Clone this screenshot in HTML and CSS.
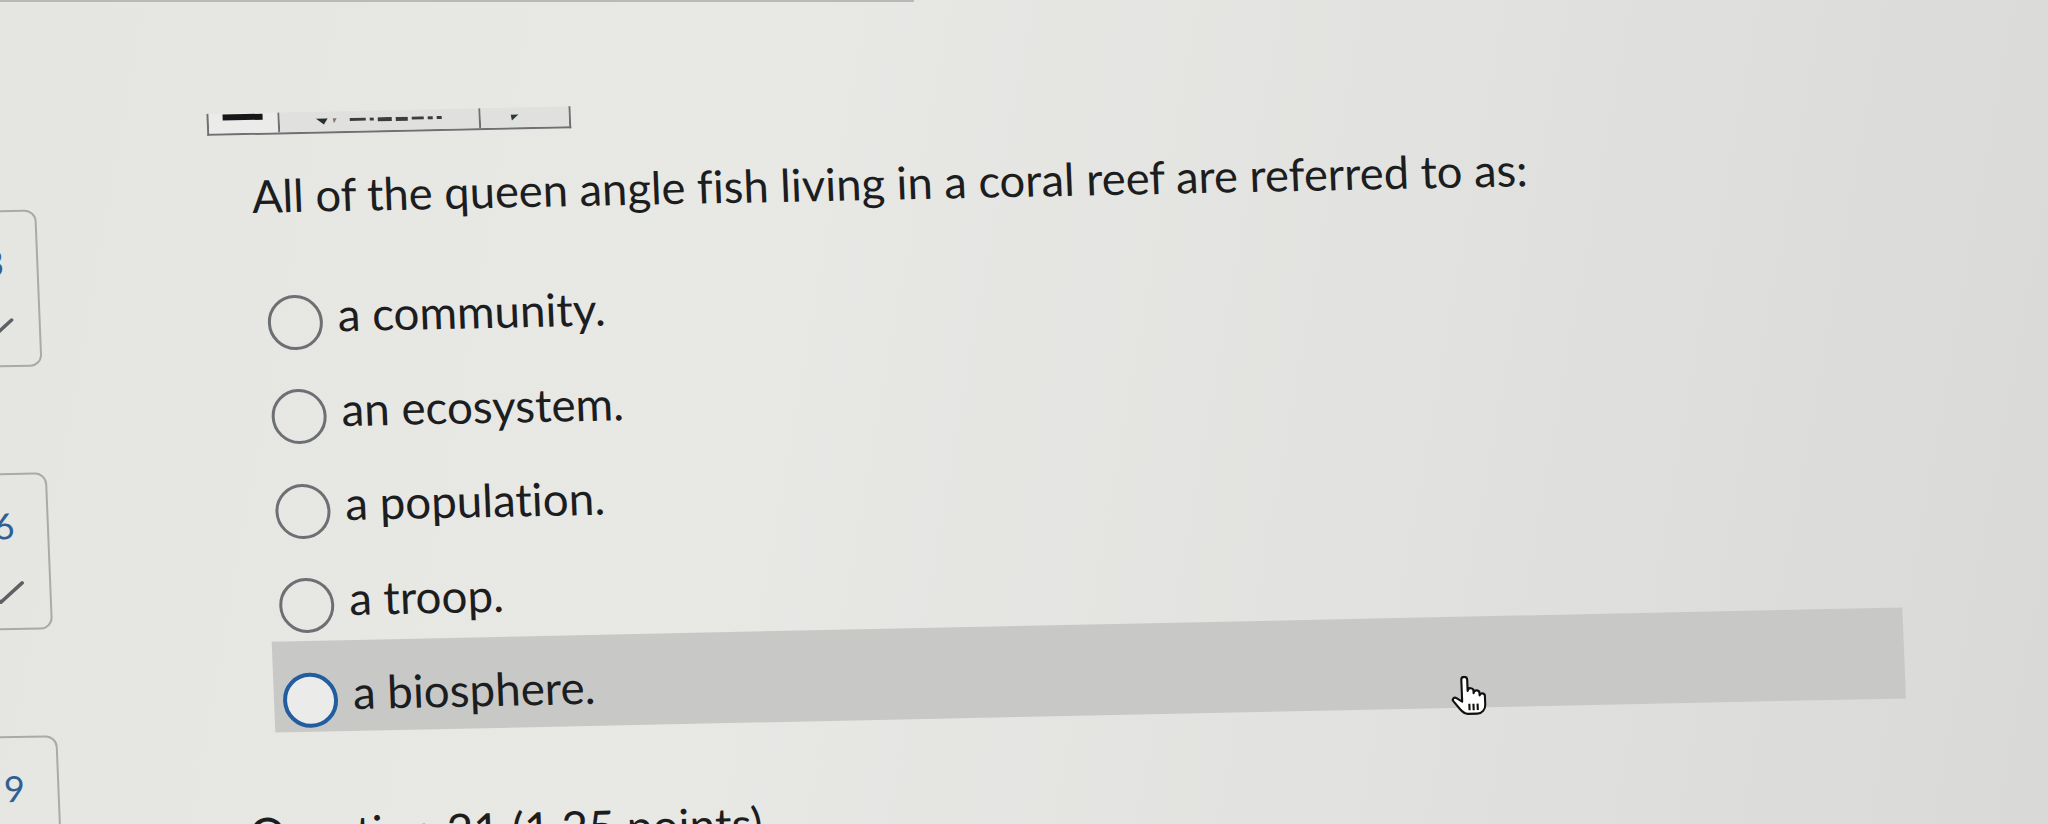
FILE: index.html
```html
<!DOCTYPE html>
<html lang="en">

<head>
    <meta charset="UTF-8">
    <meta name="viewport" content="width=device-width, initial-scale=1.0">
    <title>Quiz - Question 20</title>
    <link rel="stylesheet" href="styles.css">
</head>

<body>
    <div class="page">
        <nav class="question-nav">
            <div class="nav-card">
                <span class="nav-num">3</span>
                <svg class="nav-check" viewBox="0 0 40 26"><polyline points="4,14 14,23 36,4" /></svg>
            </div>
            <div class="nav-card">
                <span class="nav-num">6</span>
                <svg class="nav-check" viewBox="0 0 40 26"><polyline points="4,14 14,23 36,4" /></svg>
            </div>
            <div class="nav-card">
                <span class="nav-num">9</span>
            </div>
        </nav>

        <main class="quiz">
            <!-- toolbar is scrolled mostly under the top edge -->
            <div class="toolbar">
                <div class="tool tool-first"><span class="tool-bar"></span></div>
                <div class="tool tool-mid">
                    <svg width="190" height="10" viewBox="0 0 190 10">
                        <polygon points="36,0 48,0 44,6" fill="#2b2d2f" />
                        <polygon points="53,0 57,0 54,5" fill="#8a6f6a" />
                        <rect x="70" y="0" width="16" height="3" fill="#3a3c3e" />
                        <rect x="90" y="0" width="4" height="3" fill="#3a3c3e" />
                        <rect x="98" y="0" width="14" height="4" fill="#3a3c3e" />
                        <rect x="116" y="0" width="12" height="4" fill="#3a3c3e" />
                        <rect x="132" y="0" width="12" height="3" fill="#3a3c3e" />
                        <rect x="148" y="0" width="5" height="3" fill="#3a3c3e" />
                        <rect x="157" y="0" width="5" height="3" fill="#3a3c3e" />
                    </svg>
                </div>
                <div class="tool tool-last">
                    <svg width="20" height="10" viewBox="0 0 20 10"><polygon points="8,0 16,0 9,6" fill="#2b3a2f" /></svg>
                </div>
            </div>

            <p class="question-text">All of the queen angle fish living in a coral reef are referred to as:</p>

            <ul class="choices">
                <li class="choice"><input class="radio" type="radio" name="q20"><span>a community.</span></li>
                <li class="choice"><input class="radio" type="radio" name="q20"><span>an ecosystem.</span></li>
                <li class="choice"><input class="radio" type="radio" name="q20"><span>a population.</span></li>
                <li class="choice"><input class="radio" type="radio" name="q20"><span>a troop.</span></li>
                <li class="choice is-hover"><input class="radio" type="radio" name="q20"><span>a biosphere.</span></li>
            </ul>

            <h2 class="question-title">Question 21 (1.25 points)</h2>
        </main>

        <svg class="cursor" viewBox="0 0 32 34">
            <path d="M9.5 3.5a2.5 2.5 0 0 1 5 0V13a2.5 2.5 0 0 1 5 0.5V15a2.5 2.5 0 0 1 5 0.5V17a2.3 2.3 0 0 1 4.5 0.8V25c0 4-3 7.5-7 7.5H14c-3 0-4.5-1.5-6.5-4L2 21.5c-1.2-1.8 0.8-3.8 2.8-2.6L9.5 22z" />
            <path class="palm" d="M15.5 24v5.5M19 24v5.5M22.5 24v5.5" />
        </svg>
    </div>
</body>

</html>
```

FILE: styles.css
```css
* {
    padding: 0;
    margin: 0;
    box-sizing: border-box;
}

html,
body {
    width: 2048px;
    height: 824px;
    overflow: hidden;
}

body {
    font-family: Lato, "Noto Sans", sans-serif;
    font-variant-ligatures: none;
    color: #1c1d1f;
    background:
        linear-gradient(#b9bab8, #b9bab8) 0 0 / 914px 2px no-repeat,
        linear-gradient(100deg, #e5e5e2 0%, #e8e8e5 35%, #e2e3e0 65%, #d9dad7 100%);
}

/* photo of the screen is slightly tilted */
.page {
    position: relative;
    display: flex;
    width: 2048px;
    height: 824px;
    transform: rotate(-1.2deg) skewX(1.1deg);
    transform-origin: 300px 450px;
}

.question-nav {
    flex: none;
    width: 46px;
    padding-top: 204px;
    display: flex;
    flex-direction: column;
    gap: 106px;
}

.nav-card {
    flex: none;
    width: 90px;
    height: 157px;
    margin-left: -44px;
    padding-top: 30px;
    border: 2px solid #a9abaa;
    border-radius: 12px;
    display: flex;
    flex-direction: column;
    align-items: center;
}

.nav-num {
    font-size: 36px;
    line-height: 40px;
    color: #2f5f94;
}

.nav-check {
    width: 40px;
    height: 26px;
    margin-top: 34px;
    fill: none;
    stroke: #5e6164;
    stroke-width: 3.5;
    stroke-linecap: round;
    stroke-linejoin: round;
}

.quiz {
    flex: 1;
    padding: 112px 0 0 174px;
}

.toolbar {
    display: flex;
    width: 364px;
    height: 22px;
    border: 2px solid #6e7072;
    border-top: none;
    overflow: hidden;
}

.tool {
    height: 100%;
    background: #e0e1de;
}

.tool-first {
    width: 71px;
    padding: 1px 0 0 14px;
    border-right: 2px solid #6e7072;
    background: #ebebe9;
}

.tool-bar {
    display: block;
    width: 40px;
    height: 6px;
    background: #161718;
}

.tool-mid {
    width: 201px;
    padding-top: 1px;
    border-right: 2px solid #6e7072;
}

.tool-last {
    flex: 1;
    padding: 1px 0 0 22px;
}

.question-text {
    margin: 33px 0 0 42px;
    font-size: 45.3px;
    line-height: 56px;
    white-space: nowrap;
}

.choices {
    list-style: none;
    width: 1631px;
    margin: 40px 0 0 44px;
    display: flex;
    flex-direction: column;
    gap: 3.5px;
}

.choice {
    height: 91px;
    padding: 24px 0 0 8.5px;
    display: flex;
    align-items: flex-start;
    gap: 15.5px;
    font-size: 45.7px;
    line-height: 56px;
    white-space: nowrap;
}

.radio {
    appearance: none;
    flex: none;
    width: 55px;
    height: 55px;
    margin-top: 7.5px;
    border: 3px solid #6d7072;
    border-radius: 50%;
    background: transparent;
}

.choice.is-hover {
    background: #c8c9c6;
}

.choice.is-hover .radio {
    border: 4px solid #225da0;
    background: #ebebe9;
}

.question-title {
    margin: 73px 0 0 14px;
    font-size: 46px;
    font-weight: 400;
    line-height: 56px;
    white-space: nowrap;
}

.cursor {
    position: absolute;
    left: 1440px;
    top: 700px;
    width: 38px;
    height: 40px;
}

.cursor path {
    fill: #fff;
    stroke: #111;
    stroke-width: 1.8;
    stroke-linejoin: round;
}

.cursor .palm {
    fill: none;
    stroke-width: 1.8;
}
```
